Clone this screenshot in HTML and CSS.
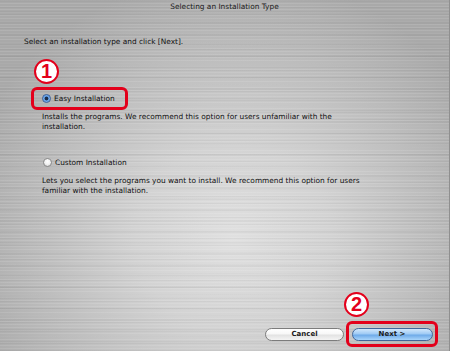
FILE: index.html
```html
<!DOCTYPE html>
<html>
<head>
<meta charset="utf-8">
<link rel="stylesheet" href="styles.css">
</head>
<body>
<div class="window">
  <div class="titlebar">Selecting an Installation Type</div>
  <div class="content">
    <p class="intro">Select an installation type and click [Next].</p>
    <div class="option">
      <div class="highlight">
        <span class="radio on"></span><span class="label">Easy Installation</span>
      </div>
      <p class="desc">Installs the programs. We recommend this option for users unfamiliar with the<br>installation.</p>
    </div>
    <div class="option second">
      <div class="row">
        <span class="radio"></span><span class="label">Custom Installation</span>
      </div>
      <p class="desc desc2">Lets you select the programs you want to install. We recommend this option for users<br>familiar with the installation.</p>
    </div>
  </div>
  <div class="footer">
    <button class="btn cancel">Cancel</button>
    <div class="next-frame"><button class="btn next">Next &gt;</button></div>
  </div>
  <span class="badge badge-one">1</span>
  <span class="badge badge-two">2</span>
</div>
</body>
</html>
```
FILE: styles.css
```css
html, body {
  margin: 0;
  padding: 0;
}
body {
  font-family: "DejaVu Sans", sans-serif;
  font-size: 7.4px;
  color: #111;
}
.window {
  position: relative;
  width: 450px;
  height: 351px;
  box-sizing: border-box;
  display: flex;
  flex-direction: column;
  border-right: 1px solid #8f8f8f;
  overflow: hidden;
  background:
    repeating-linear-gradient(180deg, rgba(255,255,255,0.10) 0 1px, transparent 1px 3px),
    repeating-linear-gradient(180deg, rgba(0,0,0,0.035) 0 1px, transparent 1px 7px),
    repeating-linear-gradient(180deg, rgba(0,0,0,0.03) 0 2px, transparent 2px 11px),
    radial-gradient(ellipse 62% 75% at 52% 68%, #e0e0e0 0%, #d3d3d3 35%, #bdbdbd 70%, #a9a9a9 100%);
}
.titlebar {
  height: 14px;
  line-height: 14px;
  text-align: center;
  color: #1a1a1a;
}
.content {
  padding-left: 24px;
}
.intro {
  margin: 23px 0 0 0;
  line-height: 10px;
}
.option {
  padding-left: 18px;
}
.highlight {
  display: flex;
  align-items: center;
  box-sizing: border-box;
  width: 97px;
  height: 23px;
  margin: 40px 0 0 -11px;
  padding-left: 8px;
  border: 3px solid #e3001b;
  border-radius: 6px;
}
.row {
  display: flex;
  align-items: center;
  height: 12px;
  margin-top: 24px;
  margin-left: 1px;
}
.label {
  margin-left: 3px;
}
.radio {
  display: inline-block;
  flex: none;
  box-sizing: border-box;
  width: 9px;
  height: 9px;
  border-radius: 50%;
  border: 1px solid #8a8a8a;
  background: radial-gradient(circle at 50% 35%, #ffffff 0%, #f1f1f1 50%, #c9c9c9 100%);
}
.radio.on {
  border-color: #3a5f99;
  background: radial-gradient(circle at 50% 50%, #1d2e48 0 1.6px, #5d9be3 2.2px, #9fcaf5 100%);
}
.desc {
  margin: 2px 0 0 0;
  line-height: 10px;
}
.desc2 {
  margin-top: 8px;
}
.footer {
  margin-top: auto;
  display: flex;
  justify-content: flex-end;
  align-items: center;
  gap: 2px;
  padding: 0 11px 4px 0;
}
.btn {
  box-sizing: border-box;
  height: 13px;
  padding: 0;
  font-family: "DejaVu Sans", sans-serif;
  font-size: 7px;
  font-weight: bold;
  color: #1a1a1a;
  border-radius: 7px;
  line-height: 11px;
  text-align: center;
}
.cancel {
  width: 79px;
  border: 1px solid #7c7c7c;
  background: linear-gradient(180deg, #ffffff 0%, #f7f7f7 45%, #e2e2e2 55%, #f4f4f4 100%);
}
.next-frame {
  box-sizing: border-box;
  width: 92px;
  height: 26px;
  border: 3px solid #e3001b;
  border-radius: 6px;
  display: flex;
  align-items: center;
  justify-content: center;
}
.next {
  width: 81px;
  border: 1px solid #40679c;
  background: linear-gradient(180deg, #d2e8fc 0%, #9ecaf4 45%, #6eaae8 55%, #a9d5fb 100%);
}
.badge {
  position: absolute;
  box-sizing: border-box;
  width: 25px;
  height: 25px;
  border-radius: 50%;
  border: 2px solid #e3001b;
  background: #ffffff;
  color: #e3001b;
  font-family: "Liberation Sans", sans-serif;
  font-weight: bold;
  font-size: 20px;
  line-height: 21px;
  text-align: center;
}
.badge-one {
  left: 34px;
  top: 59px;
}
.badge-two {
  left: 344px;
  top: 292px;
}
```
